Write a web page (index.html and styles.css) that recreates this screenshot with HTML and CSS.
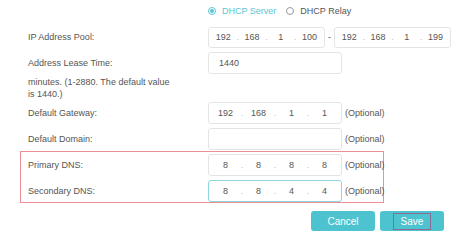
FILE: index.html
```html
<!DOCTYPE html>
<html lang="en">
<head>
    <meta charset="UTF-8">
    <title>DHCP Settings</title>
    <link rel="stylesheet" href="styles.css">
</head>
<body>
    <div class="panel">
        <div class="row radio-row">
            <span class="label"></span>
            <label class="radio checked"><span class="dot"></span>DHCP Server</label>
            <label class="radio"><span class="dot"></span>DHCP Relay</label>
        </div>

        <div class="row">
            <span class="label">IP Address Pool:</span>
            <div class="ip-box pool">
                <span>192</span><i>.</i><span>168</span><i>.</i><span>1</span><i>.</i><span>100</span>
            </div>
            <span class="dash">-</span>
            <div class="ip-box pool">
                <span>192</span><i>.</i><span>168</span><i>.</i><span>1</span><i>.</i><span>199</span>
            </div>
        </div>

        <div class="row">
            <span class="label">Address Lease Time:</span>
            <div class="text-box">1440</div>
        </div>
        <p class="note">minutes. (1-2880. The default value<br>is 1440.)</p>

        <div class="row after-note">
            <span class="label">Default Gateway:</span>
            <div class="ip-box">
                <span>192</span><i>.</i><span>168</span><i>.</i><span>1</span><i>.</i><span>1</span>
            </div>
            <span class="hint">(Optional)</span>
        </div>

        <div class="row">
            <span class="label">Default Domain:</span>
            <div class="text-box"></div>
            <span class="hint">(Optional)</span>
        </div>

        <div class="dns-group">
            <div class="row">
                <span class="label">Primary DNS:</span>
                <div class="ip-box">
                    <span>8</span><i>.</i><span>8</span><i>.</i><span>8</span><i>.</i><span>8</span>
                </div>
                <span class="hint">(Optional)</span>
            </div>
            <div class="row">
                <span class="label">Secondary DNS:</span>
                <div class="ip-box focused">
                    <span>8</span><i>.</i><span>8</span><i>.</i><span>4</span><i>.</i><span>4</span>
                </div>
                <span class="hint">(Optional)</span>
            </div>
        </div>

        <div class="actions">
            <button class="btn">Cancel</button>
            <button class="btn"><span class="focus-ring">Save</span></button>
        </div>
    </div>
</body>
</html>
```

FILE: styles.css
```css
body {
    margin: 0;
    background: #fff;
    font-family: 'Liberation Sans', Arial, sans-serif;
    font-size: 9px;
    color: #555;
}
.panel {
    padding: 0 0 0 20px;
    width: 440px;
}
.row {
    display: flex;
    align-items: center;
    height: 22px;
    padding-left: 8px;
    margin-top: 4px;
}
.row.after-note {
    margin-top: 2px;
}
.label {
    width: 180px;
    flex-shrink: 0;
}
.radio-row {
    margin-top: 0;
    height: 22px;
}
.radio {
    display: flex;
    align-items: center;
    margin-right: 10px;
    color: #555;
}
.radio .dot {
    width: 8px;
    height: 8px;
    border: 1px solid #999;
    border-radius: 50%;
    margin: 0 6px 0 0;
    box-sizing: border-box;
    position: relative;
}
.radio.checked {
    color: #5ac6d3;
}
.radio.checked .dot {
    border-color: #5ac6d3;
}
.radio.checked .dot::after {
    content: '';
    position: absolute;
    left: 1px;
    top: 1px;
    width: 4px;
    height: 4px;
    border-radius: 50%;
    background: #5ac6d3;
}
.ip-box, .text-box {
    box-sizing: border-box;
    flex-shrink: 0;
    height: 22px;
    width: 134px;
    border: 1px solid #e4e4e4;
    border-radius: 3px;
    color: #555;
}
.ip-box {
    display: flex;
    align-items: center;
}
.ip-box span {
    flex: 1;
    text-align: center;
}
.ip-box i {
    font-style: normal;
    color: #bbb;
    width: 0;
    overflow: visible;
    display: flex;
    justify-content: center;
}
.ip-box.pool {
    width: 117px;
    height: 21px;
}
.ip-box.focused {
    border-color: #8fd6df;
}
.text-box {
    padding: 0 10px;
    display: flex;
    align-items: center;
}
.dash {
    width: 9px;
    text-align: center;
}
.hint {
    margin-left: 3px;
    white-space: nowrap;
    color: #555;
}
.note {
    margin: 2px 0 0 8px;
    line-height: 12px;
}
.dns-group {
    width: 362px;
    border: 1px solid #ec8f95;
    margin-top: 1px;
    padding: 0;
}
.dns-group .row {
    padding-left: 7px;
    margin-top: 2px;
}
.dns-group .row + .row {
    margin-top: 4px;
}
.actions {
    display: flex;
    gap: 5px;
    margin: 8px 0 0 291px;
}
.btn {
    width: 64px;
    height: 20px;
    border: none;
    border-radius: 3px;
    background: #4cc3cf;
    color: #fff;
    font-family: 'Liberation Sans', Arial, sans-serif;
    font-size: 10px;
    padding: 0;
}
.focus-ring {
    display: inline-block;
    width: 36px;
    line-height: 15px;
    border: 1px solid #8a6d95;
}
```
